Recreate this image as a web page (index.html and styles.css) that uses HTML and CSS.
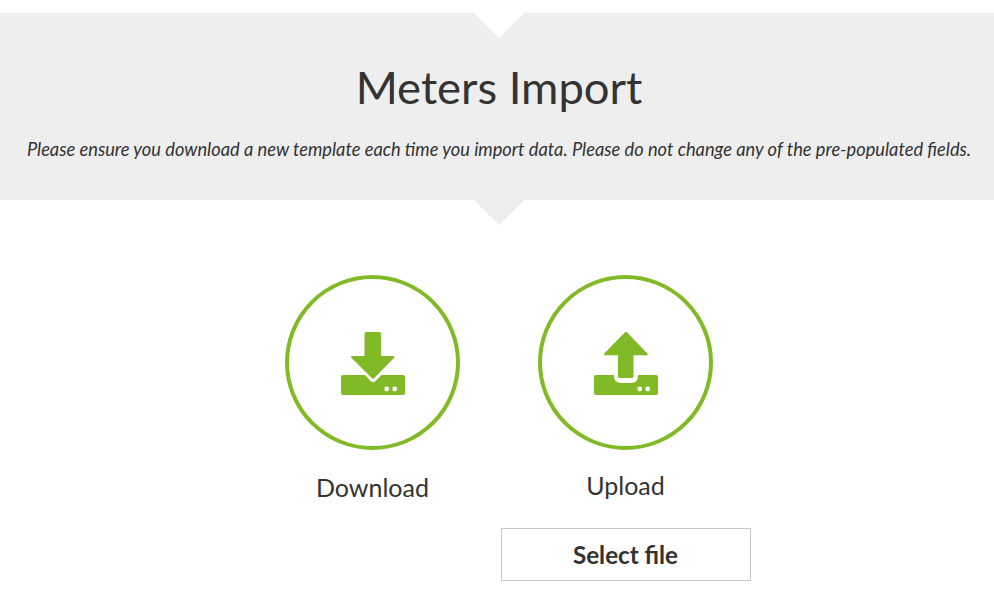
FILE: index.html
```html
<!DOCTYPE html>
<html lang="en">

<head>
    <meta charset="UTF-8">
    <meta name="viewport" content="width=device-width, initial-scale=1.0">
    <title>Meters Import</title>
    <link rel="stylesheet" href="styles.css">
</head>

<body>
    <div class="banner">
        <h1>Meters Import</h1>
        <p>Please ensure you download a new template each time you import data. Please do not change any of the pre-populated fields.</p>
    </div>

    <div class="actions">
        <div class="action action-download">
            <a class="circle" href="#">
                <svg class="icon" viewBox="0 0 64 64" width="64" height="64">
                    <path class="icon-fill" d="M25 1h13.500a1.500 1.500 0 0 1 1.500 1.500V25h12.500a1 1 0 0 1 .7 1.700L33 47.300a1.500 1.500 0 0 1-2 0L10.300 26.700a1 1 0 0 1 .7-1.700h12.500V2.500A1.500 1.500 0 0 1 25 1z" />
                    <path class="icon-fill" fill-rule="evenodd" d="M2 44H24l5 5.500q3 3.500 6 0L40.500 44H62a2 2 0 0 1 2 2v16a2 2 0 0 1-2 2H2a2 2 0 0 1-2-2V46a2 2 0 0 1 2-2zM45.700 55.600a2.400 2.400 0 1 0 0 4.800 2.400 2.400 0 0 0 0-4.800zM53.700 55.600a2.400 2.400 0 1 0 0 4.800 2.400 2.400 0 0 0 0-4.800z" />
                </svg>
            </a>
            <div class="label">Download</div>
        </div>
        <div class="action action-upload">
            <a class="circle" href="#">
                <svg class="icon" viewBox="0 0 64 64" width="64" height="64">
                    <path class="icon-fill" d="M31 1.200a1.500 1.500 0 0 1 2 0l20.400 21.400a1 1 0 0 1-.7 1.700H39.500V45.500a1.500 1.500 0 0 1-1.500 1.500H25.500a1.500 1.500 0 0 1-1.500-1.500V24.300H11a1 1 0 0 1-.7-1.700z" />
                    <path class="icon-fill" fill-rule="evenodd" d="M2 44H20v1q0 7 7 7h10q7 0 7-7v-1h18a2 2 0 0 1 2 2v16a2 2 0 0 1-2 2H2a2 2 0 0 1-2-2V46a2 2 0 0 1 2-2zM45.700 55.600a2.400 2.400 0 1 0 0 4.800 2.400 2.400 0 0 0 0-4.800zM53.700 55.600a2.400 2.400 0 1 0 0 4.800 2.400 2.400 0 0 0 0-4.800z" />
                </svg>
            </a>
            <div class="label">Upload</div>
            <button class="select-btn">Select file</button>
        </div>
    </div>
</body>

</html>
```

FILE: styles.css
```css
* {
    margin: 0;
    padding: 0;
    box-sizing: border-box;
}

body {
    font-family: Lato, 'Open Sans', sans-serif;
    background-color: #fff;
    color: #333;
    padding-top: 13px;
    overflow: hidden;
}

/* Grey banner with the two notches */
.banner {
    position: relative;
    height: 187px;
    padding: 46px 0 0 4px;
    background-color: #eeeeee;
    text-align: center;
}

.banner::before,
.banner::after {
    content: "";
    position: absolute;
    left: 474px;
    border-left: 25px solid transparent;
    border-right: 25px solid transparent;
    border-top: 25px solid #fff;
}

.banner::before {
    top: 0;
}

.banner::after {
    top: 187px;
    border-top-color: #eeeeee;
}

.banner h1 {
    font-size: 45.400px;
    font-weight: 400;
    line-height: 56px;
    margin-bottom: 22px;
}

.banner p {
    font-size: 18.250px;
    font-style: italic;
    line-height: 24px;
}

/* Download / upload columns */
.actions {
    display: flex;
    justify-content: center;
    align-items: flex-start;
    gap: 78px;
    padding: 75px 0 0 4px;
}

.action {
    display: flex;
    flex-direction: column;
    align-items: center;
    width: 175px;
}

.circle {
    display: flex;
    justify-content: center;
    align-items: center;
    width: 175px;
    height: 175px;
    border: 4px solid #80ba27;
    border-radius: 50%;
}

.icon-fill {
    fill: #80ba27;
}

.label {
    font-size: 25px;
    line-height: 32px;
}

.action-download .label {
    margin-top: 21px;
}

.action-upload .label {
    margin-top: 19px;
}

.select-btn {
    flex-shrink: 0;
    width: 250px;
    height: 53px;
    margin-top: 27px;
    font-family: inherit;
    font-size: 24.200px;
    font-weight: 700;
    color: #333;
    background-color: #fff;
    border: 1px solid #c8c8c8;
    cursor: pointer;
}
```
